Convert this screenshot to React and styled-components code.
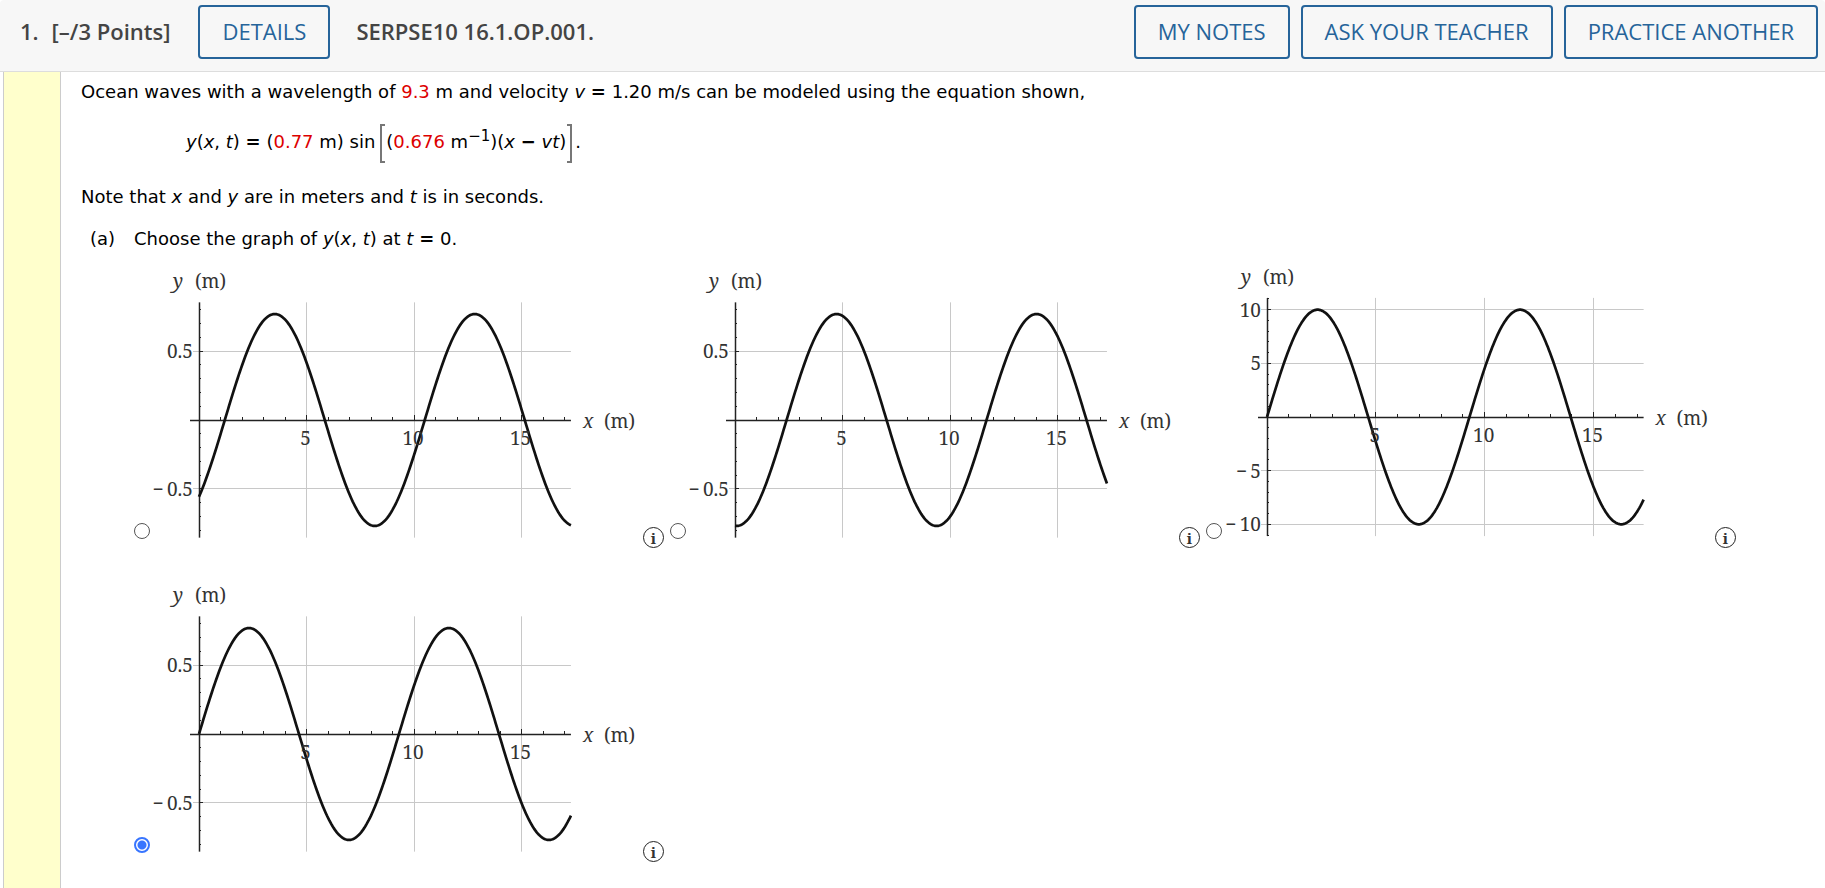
import React from 'react';
import styled, { createGlobalStyle } from 'styled-components';

const GlobalStyle = createGlobalStyle`
    * {
        box-sizing: border-box;
    }
    body {
        margin: 0;
        background: #FFFFFF;
        color: #000000;
        font-family: Verdana, "DejaVu Sans", sans-serif;
        font-size: 18px;
        line-height: 22px;
    }
`

const Header = styled.header`
    display: flex;
    align-items: center;
    height: 72px;
    padding: 0 7px 8px 20px;
    background: #F7F7F7;
    border-bottom: 1px solid #DDDDDD;
    border-radius: 4px 4px 0 0;
    font-family: "Open Sans", sans-serif;
    color: #444444;
`
const HeaderText = styled.span`
    margin-right: ${props => props.$gap}px;
    padding-bottom: 2px;
    font-size: 22px;
    font-weight: 600;
    white-space: nowrap;
`
const HeaderActions = styled.div`
    display: flex;
    gap: 11px;
    margin-left: auto;
`
const HeaderButton = styled.button`
    height: 54px;
    padding: 0 22px 2px;
    border: 2px solid #26649A;
    border-radius: 4px;
    background: transparent;
    color: #26649A;
    font-family: inherit;
    font-size: 22px;
    font-weight: 500;
    white-space: nowrap;
    cursor: pointer;
`
const HeaderTitle = styled.h1`
    margin: 0 0 0 26px;
    padding-bottom: 2px;
    font-size: 22px;
    font-weight: 600;
    white-space: nowrap;
`
const Body = styled.main`
    display: flex;
    min-height: calc(100vh - 72px);
    margin-left: 3px;
`
const Gutter = styled.div`
    flex: none;
    width: 58px;
    background: #FFFFCC;
    border: 1px solid #CCCCCC;
    border-width: 0 1px;
`
const Content = styled.section`
    flex: 1;
    min-width: 0;
    padding: 9px 0 26px 20px;
`
const Paragraph = styled.p`
    margin: 0;
`
const Given = styled.span`
    color: #DD0000;
`
const Operator = styled.span`
    font-weight: 700;
`
const Equation = styled.div`
    display: flex;
    margin: 21px 0 23px 105px;
    white-space: pre;
`
const EquationText = styled.span`
    padding-top: 7px;

    sup {
        font-size: 15px;
        line-height: 1px;
    }
`
const Bracket = styled.span`
    width: 5px;
    height: 39px;
    margin: ${props => (props.$right ? '0 3px 0 1px' : '0 1px 0 5px')};
    border: 2px solid #777777;
    border-left-width: ${props => (props.$right ? 0 : 2)}px;
    border-right-width: ${props => (props.$right ? 2 : 0)}px;
`
const Part = styled.div`
    display: grid;
    grid-template-columns: 44px 1fr;
    margin: 20px 0 0 9px;
`
const Choices = styled.div`
    grid-column: 2;
    display: flex;
    flex-wrap: wrap;
    gap: 28px 6px;
    margin-top: 12px;
`
const Choice = styled.div`
    display: flex;
    align-items: flex-end;
`
const ChoiceLabel = styled.label`
    display: flex;
    align-items: flex-end;
`
const Radio = styled.input`
    appearance: none;
    width: 16px;
    height: 16px;
    margin: 0 0 9px;
    border: 1px solid #555555;
    border-radius: 50%;
    background: #FFFFFF;

    &:checked {
        border: 2px solid #3875FF;
        background: radial-gradient(circle, #3875FF 4px, #FFFFFF 5px);
    }
`
const Graph = styled.svg`
    display: block;
    margin-right: 2px;
    font-family: "Noto Serif", "Droid Serif", "DejaVu Serif", serif;
    font-size: 19px;
    fill: #333333;
`
const InfoButton = styled.button`
    width: 21px;
    height: 21px;
    padding: 0;
    border: 1px solid #222222;
    border-radius: 50%;
    background: transparent;
    color: #333333;
    font-family: "Noto Serif", "DejaVu Serif", serif;
    font-size: 15px;
    font-weight: 700;
    line-height: 20px;
    cursor: pointer;
`

const WAVELENGTH = 9.3;
const X_MAX = 17.3;

const smallGraph = {
    originX: 49,
    originY: 158,
    unitX: 21.5,
    unitY: 137.6,
    yMax: 0.855,
    amplitude: 0.77,
    yStep: 0.1,
    yLabels: [0.5, -0.5],
};
const tallGraph = {
    originX: 45,
    originY: 155,
    unitX: 21.77,
    unitY: 10.73,
    yMax: 11.1,
    amplitude: 10,
    yStep: 1,
    yLabels: [10, 5, -5, -10],
};

const choices = [
    { ...smallGraph, shift: 1.2 },
    { ...smallGraph, shift: 2.4 },
    { ...tallGraph, shift: 0 },
    { ...smallGraph, shift: 0 },
];

const crisp = value => Math.floor(value) + 0.5;

// minus sign followed by a thin space
const formatTick = value => String(value).replace('-', '−\u2009');

function WaveGraph({ graph, title }){
    const { originX, originY, unitX, unitY, yMax, amplitude, yStep, yLabels, shift } = graph;
    const px = x => originX + x * unitX;
    const py = y => originY - y * unitY;
    const right = px(X_MAX);
    const top = py(yMax);
    const bottom = py(-yMax);

    const points = [];
    for (let x = 0; x < X_MAX; x += 0.05) {
        points.push(x);
    }
    points.push(X_MAX);
    const wave = points
        .map(x => {
            const y = amplitude * Math.sin((2 * Math.PI * (x - shift)) / WAVELENGTH);
            return `${px(x).toFixed(2)},${py(y).toFixed(2)}`;
        })
        .join(' ');

    const xTicks = Array.from({ length: 17 }, (_, i) => i + 1);
    const tickCount = Math.floor(yMax / yStep);
    const yTicks = Array.from({ length: tickCount * 2 + 1 }, (_, i) => i - tickCount).filter(n => n !== 0);

    return(
        <Graph width="491" height="286" viewBox="0 0 491 286" role="img" aria-label={title}>
            <g stroke="#C8C8C8" strokeWidth="1">
                {[5, 10, 15].map(x => (
                    <line key={x} x1={crisp(px(x))} x2={crisp(px(x))} y1={top} y2={bottom} />
                ))}
                {yLabels.map(y => (
                    <line key={y} x1={originX - 6} x2={right} y1={crisp(py(y))} y2={crisp(py(y))} />
                ))}
            </g>
            <g stroke="#222222" strokeWidth="1">
                {xTicks.map(x => (
                    <line key={x} x1={crisp(px(x))} x2={crisp(px(x))} y1={originY} y2={originY - (x % 5 ? 3 : 5)} />
                ))}
                {yTicks.map(n => (
                    <line key={n} x1={originX} x2={originX + (n % 5 ? 2 : 4)} y1={crisp(py(n * yStep))} y2={crisp(py(n * yStep))} />
                ))}
            </g>
            <g stroke="#222222" strokeWidth="1.5">
                <line x1={originX - 9} x2={right} y1={crisp(originY)} y2={crisp(originY)} />
                <line x1={crisp(originX)} x2={crisp(originX)} y1={top} y2={bottom} />
            </g>
            <polyline points={wave} fill="none" stroke="#111111" strokeWidth="2.7" />
            {[5, 10, 15].map(x => (
                <text key={x} x={px(x) - 1} y={originY + 25} textAnchor="middle">{x}</text>
            ))}
            {yLabels.map(y => (
                <text key={y} x={originX - 6} y={py(y) + 7} textAnchor="end">{formatTick(y)}</text>
            ))}
            <text x={originX - 26} y={top - 14} fontStyle="italic">y</text>
            <text x={originX - 4} y={top - 14}>(m)</text>
            <text x={right + 12} y={originY + 8} fontStyle="italic">x</text>
            <text x={right + 33} y={originY + 8}>(m)</text>
        </Graph>
    )
}

class App extends React.Component{
    state = { selected: 3 }

    render(){
        return(
            <>
            <GlobalStyle />
            <Header>
                <HeaderText $gap={13}>1.</HeaderText>
                <HeaderText $gap={28}>[–/3 Points]</HeaderText>
                <HeaderButton type="button">DETAILS</HeaderButton>
                <HeaderTitle>SERPSE10 16.1.OP.001.</HeaderTitle>
                <HeaderActions>
                    <HeaderButton type="button">MY NOTES</HeaderButton>
                    <HeaderButton type="button">ASK YOUR TEACHER</HeaderButton>
                    <HeaderButton type="button">PRACTICE ANOTHER</HeaderButton>
                </HeaderActions>
            </Header>
            <Body>
                <Gutter />
                <Content>
                    <Paragraph>
                        Ocean waves with a wavelength of <Given>9.3</Given> m and velocity <i>v</i> <Operator>=</Operator> 1.20 m/s can be modeled using the equation shown,
                    </Paragraph>
                    <Equation>
                        <EquationText><i>y</i>(<i>x</i>, <i>t</i>) <Operator>=</Operator> (<Given>0.77</Given> m) sin</EquationText>
                        <Bracket />
                        <EquationText>(<Given>0.676</Given> m<sup>−1</sup>)(<i>x</i> <Operator>−</Operator> <i>vt</i>)</EquationText>
                        <Bracket $right />
                        <EquationText>.</EquationText>
                    </Equation>
                    <Paragraph>
                        Note that <i>x</i> and <i>y</i> are in meters and <i>t</i> is in seconds.
                    </Paragraph>
                    <Part>
                        <span>(a)</span>
                        <span>Choose the graph of <i>y</i>(<i>x</i>, <i>t</i>) at <i>t</i> <Operator>=</Operator> 0.</span>
                        <Choices>
                            {choices.map((graph, i) => (
                                <Choice key={i}>
                                    <ChoiceLabel>
                                        <Radio
                                            type="radio"
                                            name="graph"
                                            checked={this.state.selected === i}
                                            onChange={() => this.setState({ selected: i })}
                                        />
                                        <WaveGraph graph={graph} title={`Graph ${i + 1}`} />
                                    </ChoiceLabel>
                                    <InfoButton type="button">i</InfoButton>
                                </Choice>
                            ))}
                        </Choices>
                    </Part>
                </Content>
            </Body>
            </>
        )
    }
}
export default App;
